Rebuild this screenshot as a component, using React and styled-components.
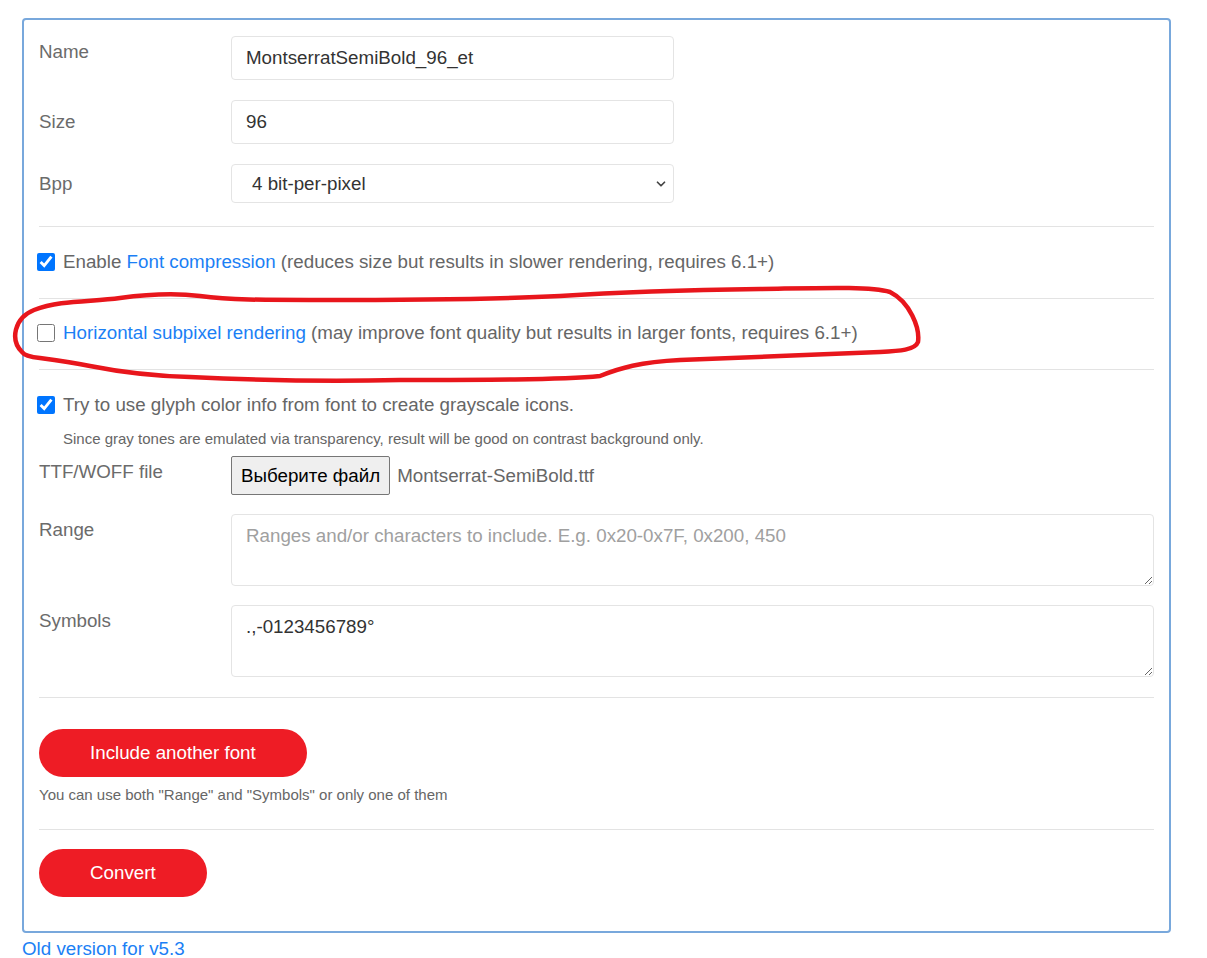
import React from 'react';
import styled, { createGlobalStyle } from 'styled-components';
import { ChevronDown } from 'lucide-react';

const Global = createGlobalStyle`
  html, body { margin: 0; padding: 0; background: #fff; }
  body {
    font-family: "Liberation Sans", Arial, sans-serif;
    font-size: 18.75px;
    color: #666;
  }
  * { box-sizing: border-box; }
`;

const Page = styled.div`
  position: relative;
  padding: 18px 0 0 22px;
  width: 1207px;
  height: 958px;
  overflow: hidden;
`;

const Panel = styled.div`
  width: 1149px;
  border: 2px solid #78a8dc;
  border-radius: 4px;
  padding: 16px 15px 34px 15px;
`;

const Fields = styled.div`
  display: flex;
  flex-direction: column;
  gap: ${p => p.gap || 20}px;
`;

const FieldRow = styled.div`
  display: grid;
  grid-template-columns: 192px 1fr;
  align-items: start;
`;

const Label = styled.label`
  padding-top: ${p => (p.center ? 0 : 3)}px;
  align-self: ${p => (p.center ? 'center' : 'start')};
  line-height: 26px;
  color: #6b6b6b;
`;

const TextInput = styled.input`
  width: 443px;
  height: 44px;
  border: 1px solid #e4e4e4;
  border-radius: 4px;
  padding: 0 14px;
  font: inherit;
  color: #333;
  outline: none;
`;

const SelectWrap = styled.div`
  position: relative;
  width: 443px;
`;

const Select = styled.select`
  appearance: none;
  width: 100%;
  height: 39px;
  border: 1px solid #e4e4e4;
  border-radius: 4px;
  padding: 0 14px 0 20px;
  font: inherit;
  color: #333;
  background: #fff;
  outline: none;
`;

const Chevron = styled(ChevronDown)`
  position: absolute;
  right: 6px;
  top: 13px;
  width: 14px;
  height: 14px;
  color: #444;
  pointer-events: none;
`;

const Divider = styled.hr`
  border: 0;
  border-top: 1px solid #e3e3e3;
  margin: ${p => p.m || '24px 0'};
`;

const CheckRow = styled.label`
  display: flex;
  align-items: center;
  gap: 8px;
  line-height: 26px;
  margin: ${p => p.m || '22px 0 23px'};
  color: #666;
`;

const Box = styled.input`
  width: 18px;
  height: 18px;
  margin: 0 0 0 -2px;
  accent-color: #0075ff;
`;

const Link = styled.a`
  color: #1b7ff5;
  text-decoration: none;
`;

const Note = styled.div`
  font-size: 15px;
  line-height: 20px;
  color: #666;
  margin: ${p => p.m || '0'};
  padding-left: ${p => p.indent || 0}px;
`;

const FileLine = styled.div`
  display: flex;
  align-items: center;
  gap: 7px;
`;

const FileButton = styled.button`
  height: 39px;
  padding: 0 9px;
  border: 1px solid #767676;
  border-radius: 2px;
  background: #efefef;
  font: inherit;
  color: #000;
`;

const FileName = styled.span`
  color: #666;
`;

const TextArea = styled.textarea`
  width: 923px;
  height: 72px;
  border: 1px solid #e4e4e4;
  border-radius: 4px;
  padding: 8px 14px 6px;
  font: inherit;
  line-height: 26px;
  color: #333;
  outline: none;
  &::placeholder { color: #a0a0a0; }
`;

const RedButton = styled.button`
  height: 48px;
  padding: 0 51px;
  border: 0;
  border-radius: 24px;
  background: #ee1c25;
  color: #fff;
  font: inherit;
`;

const Footer = styled.div`
  line-height: 26px;
  margin-top: 3px;
`;

const Scribble = styled.svg`
  position: absolute;
  left: 0;
  top: 0;
  pointer-events: none;
`;

export default function App() {
  return (
    <>
      <Global />
      <Page>
        <Panel>
          <Fields>
            <FieldRow>
              <Label>Name</Label>
              <TextInput defaultValue="MontserratSemiBold_96_et" />
            </FieldRow>
            <FieldRow>
              <Label center>Size</Label>
              <TextInput defaultValue="96" />
            </FieldRow>
            <FieldRow>
              <Label center>Bpp</Label>
              <SelectWrap>
                <Select defaultValue="4">
                  <option value="1">1 bit-per-pixel</option>
                  <option value="2">2 bit-per-pixel</option>
                  <option value="4">4 bit-per-pixel</option>
                  <option value="8">8 bit-per-pixel</option>
                </Select>
                <Chevron strokeWidth={3} />
              </SelectWrap>
            </FieldRow>
          </Fields>

          <Divider m="23px 0 0" />
          <CheckRow>
            <Box type="checkbox" defaultChecked />
            <span>Enable <Link href="#">Font compression</Link> (reduces size but results in slower rendering, requires 6.1+)</span>
          </CheckRow>
          <Divider m="0" />
          <CheckRow m="21px 0 23px">
            <Box type="checkbox" />
            <span><Link href="#">Horizontal subpixel rendering</Link> (may improve font quality but results in larger fonts, requires 6.1+)</span>
          </CheckRow>
          <Divider m="0" />
          <CheckRow m="22px 0 0">
            <Box type="checkbox" defaultChecked />
            <span>Try to use glyph color info from font to create grayscale icons.</span>
          </CheckRow>
          <Note indent={24} m="11px 0 7px">Since gray tones are emulated via transparency, result will be good on contrast background only.</Note>

          <Fields gap={19}>
            <FieldRow>
              <Label>TTF/WOFF file</Label>
              <FileLine>
                <FileButton type="button">Выберите файл</FileButton>
                <FileName>Montserrat-SemiBold.ttf</FileName>
              </FileLine>
            </FieldRow>
            <FieldRow>
              <Label>Range</Label>
              <TextArea placeholder="Ranges and/or characters to include. E.g. 0x20-0x7F, 0x200, 450" />
            </FieldRow>
            <FieldRow>
              <Label>Symbols</Label>
              <TextArea defaultValue=".,-0123456789°" />
            </FieldRow>
          </Fields>

          <Divider m="20px 0 31px" />
          <RedButton type="button">Include another font</RedButton>
          <Note m="8px 0 0">You can use both "Range" and "Symbols" or only one of them</Note>
          <Divider m="24px 0 19px" />
          <RedButton type="button">Convert</RedButton>
        </Panel>
        <Footer>
          <Link href="#">Old version for v5.3</Link>
        </Footer>

        <Scribble width="1207" height="958" viewBox="0 0 1207 958">
          <path
            d="M22 352 C10 340 14 318 34 310 C60 300 90 302 120 298 C150 294 175 293 200 296 C230 300 260 300 320 300 C420 300 500 299 560 296 C620 292 680 290 760 289 C820 288 870 286 890 292 C910 302 920 328 918 342 C915 350 900 351 880 352 C820 354 740 358 680 360 C640 362 620 368 600 376 C560 380 480 380 400 380 C320 382 250 380 190 377 C150 376 120 372 90 366 C70 362 55 360 40 358 C30 357 24 355 22 352"
            fill="none"
            stroke="#e8161c"
            strokeWidth="4.5"
            strokeLinecap="round"
            strokeLinejoin="round"
          />
        </Scribble>
      </Page>
    </>
  );
}
